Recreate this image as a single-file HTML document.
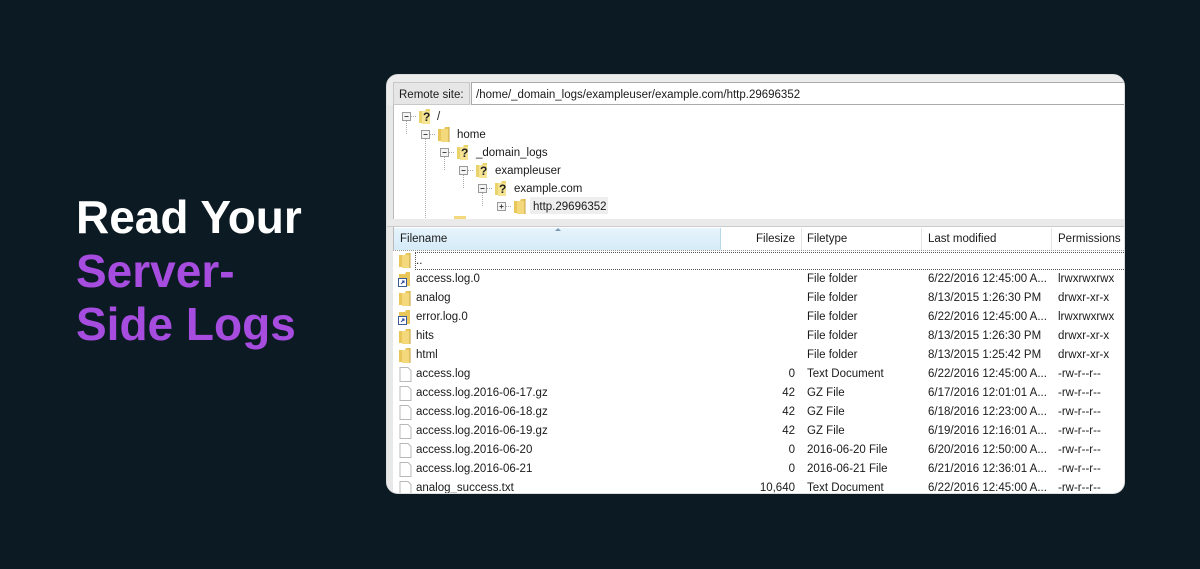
<!DOCTYPE html>
<html><head><meta charset="utf-8">
<style>
*{margin:0;padding:0;box-sizing:border-box}
body{width:1200px;height:569px;background:#0c1a24;position:relative;overflow:hidden;font-family:"Liberation Sans",sans-serif}
.h{position:absolute;left:76px;font-weight:700;font-size:46px;letter-spacing:0px;line-height:54px}
.win{position:absolute;left:386px;top:74px;width:739px;height:420px;background:#fff;border-radius:12px;overflow:hidden;border:1px solid #ddd}
.t{position:absolute;font-size:11.5px;color:#1a1a1a;white-space:nowrap;line-height:14px}
.a{position:absolute}
.r{text-align:right}
</style></head><body>
<div class="h" style="top:190px;color:#fff">Read Your</div>
<div class="h" style="top:244px;color:#a64de0">Server-</div>
<div class="h" style="top:297px;color:#a64de0">Side Logs</div>

<div class="win">
<svg width="0" height="0" style="position:absolute">
<defs>
<g id="fold"><path d="M1 3 h6 l1 -2 h4 v14 h-11z" fill="#e8c65a"/><path d="M4 3 h8 v13 h-8z" fill="#f3d97c"/><path d="M12 1 v15" stroke="#c9a43c"/></g>
<g id="q"><path d="M1 3 h6 l1 -2 h4 v14 h-11z" fill="#ead36b"/><path d="M4 3 h8 v13 h-8z" fill="#f6e493"/><text x="5" y="13" font-size="12" font-weight="bold" font-family="Liberation Sans" fill="#222">?</text></g>
<g id="file"><path d="M2 1.5 h8 l3 3 v11 h-11z" fill="#fff" stroke="#b8b8b8"/></g>
<g id="lnk"><path d="M1 3 h6 l1 -2 h4 v14 h-11z" fill="#e8c65a"/><rect x="0.5" y="7.5" width="8" height="8" fill="#fff" stroke="#3a5a9a"/><path d="M3 13 l3 -3 M4 10 h2 v2" stroke="#2a4a9a" fill="none"/></g>
<g id="mn"><rect x="0.5" y="0.5" width="8" height="8" fill="#f4f4f4" stroke="#999"/><path d="M2.5 4.5h4" stroke="#444"/></g>
<g id="pl"><rect x="0.5" y="0.5" width="8" height="8" fill="#f4f4f4" stroke="#999"/><path d="M2.5 4.5h4M4.5 2.5v4" stroke="#444"/></g>
</defs></svg>
<div class="a" style="left:0;top:0;width:739px;height:30px;background:#ececec"></div>
<div class="a" style="left:6px;top:7px;width:77px;height:23px;background:#e6e6e6;border:1px solid #c8c8c8"></div>
<div class="t" style="left:12px;top:13px">Remote site:</div>
<div class="a" style="left:84px;top:7px;width:655px;height:23px;background:#fff;border:1px solid #aaa"></div>
<div class="t" style="left:89px;top:13px">/home/_domain_logs/exampleuser/example.com/http.29696352</div>
<div class="a" style="left:0;top:30px;width:6px;height:390px;background:#e8e8e8"></div>
<div class="a" style="left:6px;top:30px;width:733px;height:114px;background:#fff;border-left:1px solid #bbb"></div>
<svg class="a" style="left:0;top:0" width="739" height="145">
<g stroke="#aaa" stroke-dasharray="1 1" fill="none">
<path d="M19.5 46 v13 M24 41.5 h6"/><path d="M38.5 64 v80 M43 59.5 h6"/><path d="M57.5 82 v13 M62 77.5 h6"/><path d="M76.5 100 v13 M81 95.5 h6"/><path d="M95.5 118 v13 M100 113.5 h6"/><path d="M119 131.5 h6"/>
</g>
<use href="#mn" x="15" y="37"/><use href="#q" x="31" y="33"/>
<use href="#mn" x="34" y="55"/><use href="#fold" x="50" y="51"/>
<use href="#mn" x="53" y="73"/><use href="#q" x="69" y="69"/>
<use href="#mn" x="72" y="91"/><use href="#q" x="88" y="87"/>
<use href="#mn" x="91" y="109"/><use href="#q" x="107" y="105"/>
<use href="#pl" x="110" y="127"/><use href="#fold" x="126" y="123"/>
<rect x="67" y="141" width="12" height="4" fill="#f3d97c"/>
</svg>
<div class="t" style="left:50px;top:35px">/</div>
<div class="t" style="left:70px;top:53px">home</div>
<div class="t" style="left:89px;top:71px">_domain_logs</div>
<div class="t" style="left:108px;top:89px">exampleuser</div>
<div class="t" style="left:127px;top:107px">example.com</div>
<div class="a" style="left:143px;top:122px;width:78px;height:17px;background:#eeeeee"></div>
<div class="t" style="left:146px;top:125px">http.29696352</div>
<div class="a" style="left:0;top:144px;width:739px;height:8px;background:#eaeaea;border-bottom:1px solid #ccc"></div>
<div class="a" style="left:6px;top:152px;width:733px;height:24px;background:#fff;border-left:1px solid #bbb;border-bottom:1px dotted #999"></div>
<div class="a" style="left:7px;top:153px;width:327px;height:22px;background:linear-gradient(#e6f4fc,#d5ebf8);border-right:1px solid #b7d7ea"></div>
<div class="a" style="left:168px;top:153px;width:0;height:0;border-left:3px solid transparent;border-right:3px solid transparent;border-bottom:3px solid #7a9ab5"></div>
<div class="a" style="left:414px;top:153px;width:1px;height:22px;background:#e4e4e4"></div>
<div class="a" style="left:534px;top:153px;width:1px;height:22px;background:#e4e4e4"></div>
<div class="a" style="left:664px;top:153px;width:1px;height:22px;background:#e4e4e4"></div>
<div class="t" style="left:13px;top:157px">Filename</div>
<div class="t r" style="left:340px;width:68px;top:157px">Filesize</div>
<div class="t" style="left:420px;top:157px">Filetype</div>
<div class="t" style="left:541px;top:157px">Last modified</div>
<div class="t" style="left:671px;top:157px">Permissions</div>
<div class="a" style="left:28px;top:177px;width:711px;height:18px;border:1px dotted #555"></div>
<svg class="a" style="left:0;top:0" width="40" height="420">
<use href="#fold" x="11" y="177"/>
<use href="#lnk" x="11" y="196"/>
<use href="#fold" x="11" y="215"/>
<use href="#lnk" x="11" y="234"/>
<use href="#fold" x="11" y="253"/>
<use href="#fold" x="11" y="272"/>
<use href="#file" x="11" y="291"/>
<use href="#file" x="11" y="310"/>
<use href="#file" x="11" y="329"/>
<use href="#file" x="11" y="348"/>
<use href="#file" x="11" y="367"/>
<use href="#file" x="11" y="386"/>
<use href="#file" x="11" y="405"/>
</svg>
<div class="t" style="left:29px;top:179px">..</div>
<div style="position:absolute;left:0;top:197px">
<div class="t" style="left:29px;top:0">access.log.0</div><div class="t" style="left:420px;top:0">File folder</div><div class="t" style="left:541px;top:0">6/22/2016 12:45:00 A...</div><div class="t" style="left:671px;top:0">lrwxrwxrwx</div>
<div class="t" style="left:29px;top:19px">analog</div><div class="t" style="left:420px;top:19px">File folder</div><div class="t" style="left:541px;top:19px">8/13/2015 1:26:30 PM</div><div class="t" style="left:671px;top:19px">drwxr-xr-x</div>
<div class="t" style="left:29px;top:38px">error.log.0</div><div class="t" style="left:420px;top:38px">File folder</div><div class="t" style="left:541px;top:38px">6/22/2016 12:45:00 A...</div><div class="t" style="left:671px;top:38px">lrwxrwxrwx</div>
<div class="t" style="left:29px;top:57px">hits</div><div class="t" style="left:420px;top:57px">File folder</div><div class="t" style="left:541px;top:57px">8/13/2015 1:26:30 PM</div><div class="t" style="left:671px;top:57px">drwxr-xr-x</div>
<div class="t" style="left:29px;top:76px">html</div><div class="t" style="left:420px;top:76px">File folder</div><div class="t" style="left:541px;top:76px">8/13/2015 1:25:42 PM</div><div class="t" style="left:671px;top:76px">drwxr-xr-x</div>
<div class="t" style="left:29px;top:95px">access.log</div><div class="t r" style="left:340px;width:68px;top:95px">0</div><div class="t" style="left:420px;top:95px">Text Document</div><div class="t" style="left:541px;top:95px">6/22/2016 12:45:00 A...</div><div class="t" style="left:671px;top:95px">-rw-r--r--</div>
<div class="t" style="left:29px;top:114px">access.log.2016-06-17.gz</div><div class="t r" style="left:340px;width:68px;top:114px">42</div><div class="t" style="left:420px;top:114px">GZ File</div><div class="t" style="left:541px;top:114px">6/17/2016 12:01:01 A...</div><div class="t" style="left:671px;top:114px">-rw-r--r--</div>
<div class="t" style="left:29px;top:133px">access.log.2016-06-18.gz</div><div class="t r" style="left:340px;width:68px;top:133px">42</div><div class="t" style="left:420px;top:133px">GZ File</div><div class="t" style="left:541px;top:133px">6/18/2016 12:23:00 A...</div><div class="t" style="left:671px;top:133px">-rw-r--r--</div>
<div class="t" style="left:29px;top:152px">access.log.2016-06-19.gz</div><div class="t r" style="left:340px;width:68px;top:152px">42</div><div class="t" style="left:420px;top:152px">GZ File</div><div class="t" style="left:541px;top:152px">6/19/2016 12:16:01 A...</div><div class="t" style="left:671px;top:152px">-rw-r--r--</div>
<div class="t" style="left:29px;top:171px">access.log.2016-06-20</div><div class="t r" style="left:340px;width:68px;top:171px">0</div><div class="t" style="left:420px;top:171px">2016-06-20 File</div><div class="t" style="left:541px;top:171px">6/20/2016 12:50:00 A...</div><div class="t" style="left:671px;top:171px">-rw-r--r--</div>
<div class="t" style="left:29px;top:190px">access.log.2016-06-21</div><div class="t r" style="left:340px;width:68px;top:190px">0</div><div class="t" style="left:420px;top:190px">2016-06-21 File</div><div class="t" style="left:541px;top:190px">6/21/2016 12:36:01 A...</div><div class="t" style="left:671px;top:190px">-rw-r--r--</div>
<div class="t" style="left:29px;top:209px">analog_success.txt</div><div class="t r" style="left:340px;width:68px;top:209px">10,640</div><div class="t" style="left:420px;top:209px">Text Document</div><div class="t" style="left:541px;top:209px">6/22/2016 12:45:00 A...</div><div class="t" style="left:671px;top:209px">-rw-r--r--</div>
</div>
</div>
</body></html>
